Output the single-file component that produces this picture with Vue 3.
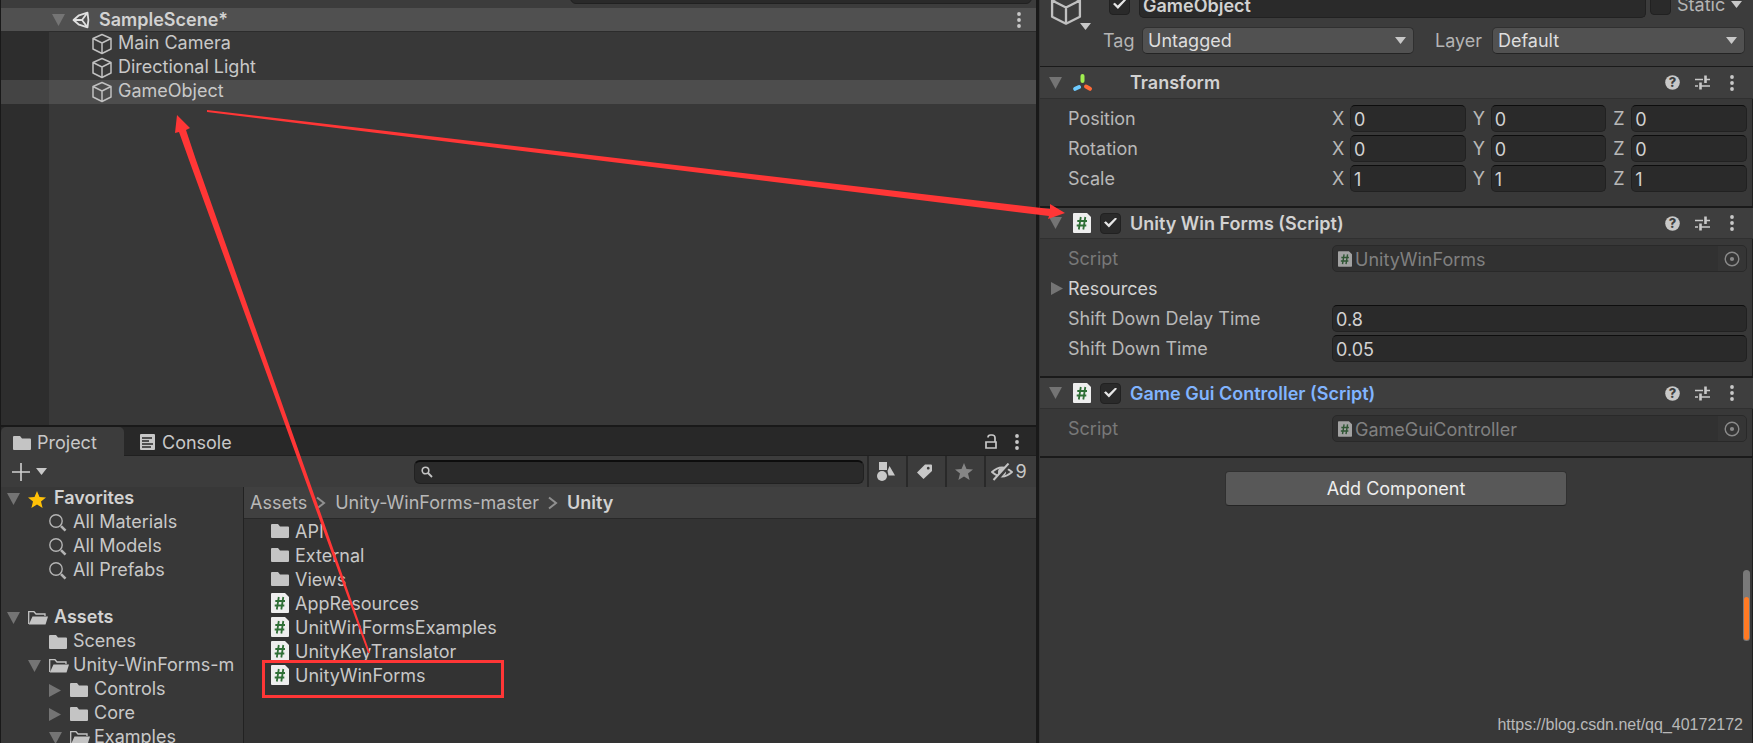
<script setup>
import { ref } from 'vue'

const objects = ref([
  { name: 'Main Camera', selected: false },
  { name: 'Directional Light', selected: false },
  { name: 'GameObject', selected: true },
])

const tree = [
  { name: 'Favorites', depth: 0, arrow: 'down', icon: 'star', bold: true, gold: true },
  { name: 'All Materials', depth: 1, icon: 'lens' },
  { name: 'All Models', depth: 1, icon: 'lens' },
  { name: 'All Prefabs', depth: 1, icon: 'lens' },
  { gap: true },
  { name: 'Assets', depth: 0, arrow: 'down', icon: 'folder-open', bold: true },
  { name: 'Scenes', depth: 1, icon: 'folder' },
  { name: 'Unity-WinForms-m', depth: 1, arrow: 'down', icon: 'folder-open' },
  { name: 'Controls', depth: 2, arrow: 'right', icon: 'folder' },
  { name: 'Core', depth: 2, arrow: 'right', icon: 'folder' },
  { name: 'Examples', depth: 2, arrow: 'down', icon: 'folder-open' },
]

const files = [
  { name: 'API', icon: 'folder' },
  { name: 'External', icon: 'folder' },
  { name: 'Views', icon: 'folder' },
  { name: 'AppResources', icon: 'script' },
  { name: 'UnitWinFormsExamples', icon: 'script' },
  { name: 'UnityKeyTranslator', icon: 'script' },
  { name: 'UnityWinForms', icon: 'script', marked: true },
]

const transform = ref([
  { name: 'Position', axes: { X: '0', Y: '0', Z: '0' } },
  { name: 'Rotation', axes: { X: '0', Y: '0', Z: '0' } },
  { name: 'Scale', axes: { X: '1', Y: '1', Z: '1' } },
])

const objectName = ref('GameObject')
const search = ref('')
const hierarchySearch = ref('')
const delay = ref('0.8')
const time = ref('0.05')
const active = ref(true)
const isStatic = ref(false)
const winFormsOn = ref(true)
const guiOn = ref(true)
</script>

<template>
  <div class="editor">
    <svg class="defs" aria-hidden="true">
      <symbol id="i-down" viewBox="0 0 13 12"><path d="M0 0H13L6.500 12Z" fill="#747474" /></symbol>
      <symbol id="i-right" viewBox="0 0 12 13"><path d="M0 0V13L12 6.500Z" fill="#747474" /></symbol>
      <symbol id="i-caret" viewBox="0 0 11 7"><path d="M0 0H11L5.500 7Z" fill="#c8c8c8" /></symbol>
      <symbol id="i-cube" viewBox="0 0 20 22">
        <path d="M10 1.500L19 5.500V16L10 20.500L1 16V5.500ZM1 5.500L10 10L19 5.500M10 10V20.500" fill="none" stroke="#c0c0c0" stroke-width="1.500" stroke-linejoin="round" />
      </symbol>
      <symbol id="i-unity" viewBox="0 0 18 18">
        <path d="M1.500 9L7 4.300L15.500 1.600L16.400 9L15.500 16.400L7 13.700ZM1.500 9H10M10 9L15.500 1.600M10 9L15.500 16.400" fill="none" stroke="#e0e0e0" stroke-width="1.800" stroke-linejoin="round" />
      </symbol>
      <symbol id="i-kebab" viewBox="0 0 4 16">
        <circle cx="2" cy="2" r="1.900" /><circle cx="2" cy="8" r="1.900" /><circle cx="2" cy="14" r="1.900" />
      </symbol>
      <symbol id="i-folder" viewBox="0 0 20 16">
        <path d="M0 2Q0 1 1 1H7L9 3.500H17Q18 3.500 18 4.500V14Q18 15 17 15H1Q0 15 0 14Z" fill="#c4c4c4" />
      </symbol>
      <symbol id="i-folder-open" viewBox="0 0 20 16">
        <path d="M0.700 14V1.700H6L8 4H17V6" fill="none" stroke="#c4c4c4" stroke-width="1.300" />
        <path d="M4.500 6.500H20L17.500 14.500H0.800Z" fill="#c4c4c4" />
      </symbol>
      <symbol id="i-script" viewBox="0 0 18 20">
        <path d="M1 0H14L18 4V19Q18 20 17 20H1Q0 20 0 19V1Q0 0 1 0Z" fill="#eeeeee" />
        <path d="M7.800 4L5.800 16.500M12.300 4L10.300 16.500M4.300 8H14M3.700 12.500H13.300" fill="none" stroke="#2f6f36" stroke-width="1.800" />
      </symbol>
      <symbol id="i-star" viewBox="0 0 18 17">
        <path d="M9 0L11.500 5.900L18 6.400L13 10.600L14.600 17L9 13.500L3.400 17L5 10.600L0 6.400L6.500 5.900Z" />
      </symbol>
      <symbol id="i-lens" viewBox="0 0 18 18">
        <circle cx="7" cy="7" r="6.200" fill="none" stroke="#b4b4b4" stroke-width="1.400" />
        <path d="M12 12.200L16.500 16.700" stroke="#b4b4b4" stroke-width="2.600" />
      </symbol>
      <symbol id="i-search" viewBox="0 0 12 12">
        <circle cx="4.500" cy="4.500" r="3.300" fill="none" stroke="#c4c4c4" stroke-width="1.600" />
        <path d="M7 7L11 11" stroke="#c4c4c4" stroke-width="1.800" />
      </symbol>
      <symbol id="i-console" viewBox="0 0 16 17">
        <path d="M1 0H14Q15 0 15 1V15Q15 16 14 16H1Q0 16 0 15V1Q0 0 1 0Z" fill="#c8c8c8" />
        <path d="M2 4H12M2 7H9M2 10H13M2 13H11" stroke="#282828" stroke-width="1.300" />
      </symbol>
      <symbol id="i-lock" viewBox="0 0 12 15">
        <path d="M1 8H11V14H1ZM10 8V4Q10 1 7 1H5.500Q3 1 3 3.500" fill="none" stroke="#c8c8c8" stroke-width="1.700" />
      </symbol>
      <symbol id="i-plus" viewBox="0 0 18 18"><path d="M9 0V18M0 9H18" stroke="#d0d0d0" stroke-width="1.600" /></symbol>
      <symbol id="i-shapes" viewBox="0 0 18 19">
        <rect x="2" y="0" width="8" height="8" /><circle cx="5" cy="14" r="5" /><path d="M12.500 4L18 13.500H11.500L10.500 9Z" />
      </symbol>
      <symbol id="i-tag" viewBox="0 0 15 15">
        <path fill-rule="evenodd" d="M8 0.500H14Q15 0.500 15 1.500V7L6.500 15L0 8.500ZM11.200 2.800a1.400 1.400 0 1 0 .1 0Z" />
      </symbol>
      <symbol id="i-eye" viewBox="0 0 22 18">
        <path d="M1 9Q11 0 21 9Q11 18 1 9Z" fill="none" stroke="#c4c4c4" stroke-width="1.800" />
        <circle cx="11" cy="9" r="4" fill="#c4c4c4" />
        <path d="M4 18L19 1" stroke="#3c3c3c" stroke-width="4" /><path d="M2.500 17L17.500 0.500" stroke="#c4c4c4" stroke-width="2" />
      </symbol>
      <symbol id="i-axes" viewBox="0 0 20 18">
        <path d="M9.500 2V7" stroke="#a0ee50" stroke-width="4" stroke-linecap="round" />
        <path d="M6 13L2.200 14.800" stroke="#6ecbff" stroke-width="4" stroke-linecap="round" />
        <path d="M13 12.500L17 14.800" stroke="#ff6a38" stroke-width="4" stroke-linecap="round" />
      </symbol>
      <symbol id="i-help" viewBox="0 0 15 15">
        <circle cx="7.500" cy="7.500" r="7.300" fill="#c8c8c8" />
        <text x="7.500" y="12" text-anchor="middle" font-family="Inter, sans-serif" font-size="13" font-weight="800" fill="#3e3e3e">?</text>
      </symbol>
      <symbol id="i-preset" viewBox="0 0 15 15">
        <path d="M0 4.500H8M11 4.500H15M0 11H3M6 11H15" stroke="#c8c8c8" stroke-width="1.400" />
        <path d="M10.500 0.500V8M5.500 7.500V14.500" stroke="#c8c8c8" stroke-width="2.600" />
      </symbol>
      <symbol id="i-target" viewBox="0 0 16 16">
        <circle cx="8" cy="8" r="6.800" fill="none" stroke="#8a8a8a" stroke-width="1.400" /><circle cx="8" cy="8" r="2.100" fill="#8a8a8a" />
      </symbol>
      <symbol id="i-chevron" viewBox="0 0 10 14"><path d="M1 1.500L8 7L1 12.500" fill="none" stroke="#909090" stroke-width="2" /></symbol>
    </svg>

    <div class="left">
      <section class="hierarchy">
        <div class="hier-bar">
          <input v-model="hierarchySearch" class="hier-search" type="text" aria-label="Search hierarchy" />
        </div>
        <div class="scene">
          <svg class="tri"><use href="#i-down" /></svg>
          <svg class="unity"><use href="#i-unity" /></svg>
          <strong>SampleScene*</strong>
          <button class="icon-btn" aria-label="Scene menu"><svg class="kebab"><use href="#i-kebab" /></svg></button>
        </div>
        <ul class="objects">
          <li v-for="o in objects" :key="o.name" :class="{ selected: o.selected }">
            <svg class="cube"><use href="#i-cube" /></svg><span>{{ o.name }}</span>
          </li>
        </ul>
      </section>

      <section class="project">
        <div class="tabs">
          <button class="tab current"><svg class="folder"><use href="#i-folder" /></svg>Project</button>
          <button class="tab"><svg class="console"><use href="#i-console" /></svg>Console</button>
          <div class="tab-tools">
            <button class="icon-btn" aria-label="Lock"><svg class="lock"><use href="#i-lock" /></svg></button>
            <button class="icon-btn" aria-label="Project menu"><svg class="kebab"><use href="#i-kebab" /></svg></button>
          </div>
        </div>
        <div class="toolbar">
          <button class="icon-btn add" aria-label="Create">
            <svg class="plus"><use href="#i-plus" /></svg><svg class="caret"><use href="#i-caret" /></svg>
          </button>
          <label class="search">
            <svg class="search-icon"><use href="#i-search" /></svg>
            <input v-model="search" type="text" aria-label="Search project" />
          </label>
          <div class="filters">
            <button aria-label="Search by type"><svg class="shapes"><use href="#i-shapes" /></svg></button>
            <button aria-label="Search by label"><svg class="tag"><use href="#i-tag" /></svg></button>
            <button class="dim" aria-label="Save search"><svg class="star"><use href="#i-star" /></svg></button>
            <button class="wide" aria-label="Hidden packages"><svg class="eye"><use href="#i-eye" /></svg>9</button>
          </div>
        </div>
        <div class="browser">
          <ul class="tree">
            <template v-for="(n, i) in tree" :key="i">
              <li v-if="n.gap" class="gap"></li>
              <li v-else :class="['depth-' + n.depth, { bold: n.bold }]">
                <span class="fold"><svg v-if="n.arrow" :class="n.arrow === 'down' ? 'tri' : 'tri-r'"><use :href="'#i-' + n.arrow" /></svg></span>
                <svg :class="[n.icon, { gold: n.gold }]"><use :href="'#i-' + n.icon" /></svg>
                <span class="name">{{ n.name }}</span>
              </li>
            </template>
          </ul>
          <div class="content">
            <nav class="crumbs">
              <a href="#">Assets</a><svg class="chevron"><use href="#i-chevron" /></svg>
              <a href="#">Unity-WinForms-master</a><svg class="chevron"><use href="#i-chevron" /></svg>
              <strong>Unity</strong>
            </nav>
            <ul class="files">
              <li v-for="f in files" :key="f.name">
                <svg :class="f.icon"><use :href="'#i-' + f.icon" /></svg><span>{{ f.name }}</span>
                <i v-if="f.marked" class="mark"></i>
              </li>
            </ul>
          </div>
        </div>
      </section>
    </div>

    <section class="inspector">
      <header class="object">
        <div class="object-icon">
          <svg class="big-cube"><use href="#i-cube" /></svg><svg class="caret"><use href="#i-caret" /></svg>
        </div>
        <div class="object-fields">
          <div class="name-row">
            <input v-model="active" class="check" type="checkbox" aria-label="Active" />
            <input v-model="objectName" class="field object-name" type="text" aria-label="Name" />
            <label class="static"><input v-model="isStatic" class="check" type="checkbox" />Static<svg class="caret"><use href="#i-caret" /></svg></label>
          </div>
          <div class="tag-row">
            <label for="tag">Tag</label>
            <div class="drop tag-drop">
              <select id="tag"><option>Untagged</option></select><svg class="caret"><use href="#i-caret" /></svg>
            </div>
            <label for="layer" class="layer">Layer</label>
            <div class="drop layer-drop">
              <select id="layer"><option>Default</option></select><svg class="caret"><use href="#i-caret" /></svg>
            </div>
          </div>
        </div>
      </header>

      <article class="component first">
        <header>
          <svg class="tri"><use href="#i-down" /></svg>
          <svg class="axes"><use href="#i-axes" /></svg>
          <span class="no-check"></span>
          <h2>Transform</h2>
          <div class="tools">
            <button class="icon-btn" aria-label="Help"><svg class="tool"><use href="#i-help" /></svg></button>
            <button class="icon-btn" aria-label="Presets"><svg class="tool"><use href="#i-preset" /></svg></button>
            <button class="icon-btn" aria-label="Menu"><svg class="kebab"><use href="#i-kebab" /></svg></button>
          </div>
        </header>
        <div class="body">
          <div v-for="row in transform" :key="row.name" class="row">
            <span class="label">{{ row.name }}</span>
            <div class="axes-row">
              <label v-for="(v, axis) in row.axes" :key="axis"><span>{{ axis }}</span><input v-model="row.axes[axis]" class="field" type="text" /></label>
            </div>
          </div>
        </div>
      </article>

      <article class="component">
        <header>
          <svg class="tri"><use href="#i-down" /></svg>
          <svg class="script"><use href="#i-script" /></svg>
          <input v-model="winFormsOn" class="check" type="checkbox" aria-label="Unity Win Forms enabled" />
          <h2>Unity Win Forms (Script)</h2>
          <div class="tools">
            <button class="icon-btn" aria-label="Help"><svg class="tool"><use href="#i-help" /></svg></button>
            <button class="icon-btn" aria-label="Presets"><svg class="tool"><use href="#i-preset" /></svg></button>
            <button class="icon-btn" aria-label="Menu"><svg class="kebab"><use href="#i-kebab" /></svg></button>
          </div>
        </header>
        <div class="body">
          <div class="row disabled">
            <span class="label">Script</span>
            <div class="field ref"><svg class="mini-script"><use href="#i-script" /></svg><span>UnityWinForms</span><button disabled class="pick" aria-label="Pick script"><svg class="target"><use href="#i-target" /></svg></button></div>
          </div>
          <div class="row resources">
            <svg class="tri-r"><use href="#i-right" /></svg>
            <span class="label">Resources</span>
          </div>
          <div class="row">
            <label class="label" for="delay">Shift Down Delay Time</label>
            <input id="delay" v-model="delay" class="field" type="text" />
          </div>
          <div class="row">
            <label class="label" for="time">Shift Down Time</label>
            <input id="time" v-model="time" class="field" type="text" />
          </div>
        </div>
      </article>

      <article class="component">
        <header>
          <svg class="tri"><use href="#i-down" /></svg>
          <svg class="script"><use href="#i-script" /></svg>
          <input v-model="guiOn" class="check" type="checkbox" aria-label="Game Gui Controller enabled" />
          <h2 class="blue">Game Gui Controller (Script)</h2>
          <div class="tools">
            <button class="icon-btn" aria-label="Help"><svg class="tool"><use href="#i-help" /></svg></button>
            <button class="icon-btn" aria-label="Presets"><svg class="tool"><use href="#i-preset" /></svg></button>
            <button class="icon-btn" aria-label="Menu"><svg class="kebab"><use href="#i-kebab" /></svg></button>
          </div>
        </header>
        <div class="body">
          <div class="row disabled">
            <span class="label">Script</span>
            <div class="field ref"><svg class="mini-script"><use href="#i-script" /></svg><span>GameGuiController</span><button disabled class="pick" aria-label="Pick script"><svg class="target"><use href="#i-target" /></svg></button></div>
          </div>
        </div>
      </article>

      <footer class="rest">
        <button class="add-component">Add Component</button>
        <div class="meter"><div class="meter-fill"></div></div>
        <p class="credit">https://blog.csdn.net/qq_40172172</p>
      </footer>
    </section>

    <svg class="arrows" viewBox="0 0 1753 743" aria-hidden="true">
      <path d="M177 115L190 128L186 130L196 160L370 653L368 653L189 160L179 132L175 133Z" />
      <path d="M1065 213L1048 219L1049 216L207 112L207 110L1050 209L1050 204Z" />
    </svg>
  </div>
</template>

<style>
body {
  background: #383838;
}
</style>

<style scoped>
.editor {
  position: relative;
  display: grid;
  grid-template-columns: minmax(0, 1039fr) minmax(0, 714fr);
  height: 100vh;
  overflow: hidden;
  background: #383838;
  color: #c8c8c8;
  font: 18px/22px Inter, "Liberation Sans", sans-serif;
}
.editor * {
  box-sizing: border-box;
}
.defs {
  position: absolute;
  width: 0;
  height: 0;
}
svg {
  flex: none;
  display: block;
  fill: #c8c8c8;
}
ul {
  list-style: none;
  margin: 0;
  padding: 0;
}
button,
input,
select {
  font: inherit;
  color: inherit;
  margin: 0;
}
button {
  border: 0;
  padding: 0;
  background: none;
}
strong {
  font-weight: 600;
  color: #d2d2d2;
}

.tri { width: 13px; height: 12px; }
.tri-r { width: 12px; height: 13px; }
.caret { width: 11px; height: 7px; }
.kebab { width: 4px; height: 16px; }
.cube { width: 20px; height: 22px; }
.unity { width: 18px; height: 18px; }
.folder, .folder-open { width: 20px; height: 16px; }
.script { width: 18px; height: 20px; }
.star { width: 18px; height: 17px; }
.lens { width: 18px; height: 18px; }
.gold { fill: #ffc107; }

.left {
  display: flex;
  flex-direction: column;
  min-height: 0;
  border-left: 1px solid #191919;
  border-right: 3px solid #191919;
}
.hierarchy {
  flex: 425 1 0;
  min-height: 0;
  display: flex;
  flex-direction: column;
}
.hier-bar {
  flex: none;
  display: flex;
  align-items: flex-end;
  justify-content: flex-end;
  height: 8px;
  padding: 0 4px 4px 0;
  background: #3c3c3c;
  overflow: hidden;
}
.hier-search {
  flex: none;
  width: 462px;
  height: 24px;
  border: 1px solid #212121;
  border-radius: 6px;
  background: #2a2a2a;
}
.scene {
  flex: none;
  display: flex;
  align-items: center;
  height: 24px;
  padding: 0 15px 0 51px;
  background: #505050;
  border-bottom: 1px solid #2c2c2c;
}
.scene .unity { margin: 0 9px 0 7px; }
.scene .icon-btn { margin-left: auto; }
.objects {
  flex: 1;
  background: linear-gradient(to right, #2d2d2d 48px, #383838 48px);
}
.objects li {
  display: flex;
  align-items: center;
  height: 24px;
  padding-left: 91px;
}
.objects span,
.tree .name {
  padding-bottom: 2px;
}
.objects .cube { margin-right: 6px; }
.objects .selected {
  background: linear-gradient(to right, #444444 48px, #4d4d4d 48px);
}

.project {
  flex: 316 1 0;
  min-height: 0;
  display: flex;
  flex-direction: column;
  border-top: 2px solid #191919;
}
.tabs {
  flex: none;
  display: flex;
  height: 29px;
  background: #282828;
  box-shadow: inset 0 -1px #202020;
}
.tab {
  display: flex;
  align-items: center;
  gap: 6px;
  padding: 2px 16px 0;
}
.tab.current {
  width: 123px;
  padding: 2px 0 0 12px;
  gap: 4px;
  background: #3c3c3c;
  border-radius: 5px 5px 0 0;
}
.console { width: 16px; height: 17px; }
.tab-tools {
  display: flex;
  align-items: center;
  gap: 18px;
  margin-left: auto;
  padding-right: 17px;
}
.lock { width: 12px; height: 15px; }
.toolbar {
  flex: none;
  display: flex;
  align-items: center;
  height: 31px;
  background: #3c3c3c;
}
.add {
  display: flex;
  align-items: center;
  gap: 6px;
  margin-left: 11px;
}
.plus { width: 18px; height: 18px; }
.search {
  display: flex;
  align-items: center;
  gap: 6px;
  width: 450px;
  height: 24px;
  margin-left: auto;
  padding: 0 6px;
  border: 1px solid #212121;
  border-top: 2px solid #0d0d0d;
  border-radius: 6px;
  background: #2a2a2a;
}
.search-icon { width: 12px; height: 12px; }
.search input {
  flex: 1;
  min-width: 0;
  border: 0;
  padding: 0;
  background: none;
  outline: 0;
}
.filters {
  display: flex;
  align-self: stretch;
  margin-left: 3px;
}
.filters button {
  display: flex;
  align-items: center;
  justify-content: center;
  gap: 2px;
  width: 39px;
  padding-right: 4px;
  border-left: 2px solid #292929;
}
.filters .wide { width: 52px; }
.shapes { width: 18px; height: 19px; }
.tag { width: 15px; height: 15px; }
.dim .star { fill: #868686; }
.eye { width: 22px; height: 18px; }

.browser {
  flex: 1;
  min-height: 0;
  display: grid;
  grid-template-columns: 243px minmax(0, 1fr);
}
.tree {
  overflow: hidden;
  border-right: 1px solid #222222;
}
.tree li {
  display: flex;
  align-items: center;
  height: 24px;
  white-space: nowrap;
}
.tree .gap { height: 23px; }
.tree .fold {
  flex: none;
  display: flex;
  width: 21px;
}
.tree .bold {
  font-weight: 600;
  color: #d2d2d2;
}
.tree .depth-0 { padding-left: 6px; }
.tree .depth-1 { padding-left: 27px; }
.tree .depth-2 { padding-left: 48px; }
.tree .name { margin-left: 4px; }
.tree .lens + .name { margin-left: 6px; }
.tree .star + .name { margin-left: 8px; }
.tree .bold .folder-open + .name { margin-left: 6px; }
.content { background: #333333; }
.crumbs {
  display: flex;
  align-items: center;
  gap: 9px;
  height: 32px;
  padding-left: 6px;
  background: #404040;
  border-bottom: 1px solid #282828;
}
.crumbs a {
  color: #b8b8b8;
  text-decoration: none;
}
.chevron { width: 10px; height: 14px; }
.files li {
  position: relative;
  display: flex;
  align-items: center;
  height: 24px;
  padding-left: 27px;
}
.files span { padding-top: 1px; }
.files svg { margin-right: 6px; }
.files .folder { margin-right: 4px; }
.mark {
  position: absolute;
  left: 18px;
  top: -3px;
  width: 242px;
  height: 38px;
  border: 3px solid #ff3636;
}

.inspector {
  display: flex;
  flex-direction: column;
  min-width: 0;
  min-height: 0;
  border-left: 1px solid #333333;
}
.object {
  flex: none;
  display: flex;
  align-items: flex-end;
  height: 66px;
  overflow: hidden;
  padding: 0 8px 12px 10px;
  background: #3c3c3c;
}
.object-icon {
  display: flex;
  align-items: flex-end;
  width: 53px;
  padding-bottom: 24px;
}
.big-cube { width: 32px; height: 34px; margin-bottom: 4px; }
.object-icon .caret { margin-left: -2px; }
.object-fields {
  flex: 1;
  min-width: 0;
  display: flex;
  flex-direction: column;
  gap: 9px;
}
.name-row,
.tag-row,
.static {
  display: flex;
  align-items: center;
}
.name-row { padding-left: 6px; }
.object-name {
  flex: 1;
  min-width: 0;
  margin: 0 4px 0 9px;
  font-weight: 600;
}
.static { width: 95px; gap: 6px; }
.static .caret { margin-left: auto; margin-right: 3px; }
.static,
.tag-row label {
  color: #b4b4b4;
}
.tag-row > label:first-child { width: 39px; }
.tag-row .layer { width: 78px; padding-left: 21px; }
.drop {
  position: relative;
  min-width: 0;
}
.tag-drop { flex: 272 1 0; }
.layer-drop { flex: 253 1 0; }
.drop select {
  display: block;
  width: 100%;
  height: 27px;
  padding: 0 5px;
  appearance: none;
  border: 1px solid #303030;
  border-bottom-color: #242424;
  border-radius: 5px;
  background: #515151;
  color: #dedede;
}
.drop .caret {
  position: absolute;
  right: 8px;
  top: 10px;
  pointer-events: none;
}

.check {
  flex: none;
  display: block;
  width: 21px;
  height: 21px;
  appearance: none;
  border: 1px solid #212121;
  border-radius: 4px;
  background: #2a2a2a;
}
.check:checked::before {
  content: "";
  display: block;
  width: 13px;
  height: 10px;
  margin: 4px 3px;
  background: #e6e6e6;
  clip-path: polygon(0 50%, 14% 38%, 36% 66%, 88% 0, 100% 12%, 38% 100%);
}
.field {
  height: 27px;
  padding: 1px 4px 0 3px;
  border: 1px solid #212121;
  border-top-color: #0d0d0d;
  border-radius: 5px;
  background: #2a2a2a;
  color: #d2d2d2;
  outline: 0;
}

.component {
  flex: none;
  border-top: 2px solid #1a1a1a;
}
.component.first { border-top-width: 1px; }
.component header {
  display: flex;
  align-items: center;
  height: 31px;
  padding: 0 19px 0 9px;
  background: #3e3e3e;
  border-bottom: 1px solid #303030;
}
.component.first header { height: 32px; }
.component h2 {
  margin: 0 0 0 9px;
  padding-top: 1px;
  font-size: 18px;
  font-weight: 600;
  color: #d2d2d2;
}
.component .blue { color: #81b4ff; }
.component header .script { margin: 0 9px 0 11px; }
.axes { width: 20px; height: 18px; margin: 0 7px 0 11px; }
.no-check { width: 21px; }
.tools {
  display: flex;
  align-items: center;
  gap: 15px;
  margin-left: auto;
}
.tool { width: 15px; height: 15px; }
.tools .kebab { margin-left: 5px; }
.body {
  display: flex;
  flex-direction: column;
  gap: 3px;
  padding: 6px 5px 14px 28px;
  border-right: 1px solid #1f1f1f;
}
.row {
  position: relative;
  display: grid;
  grid-template-columns: 264px minmax(0, 1fr);
  align-items: center;
  height: 27px;
}
.label {
  padding-top: 1px;
  color: #b8b8b8;
}
.axes-row {
  display: grid;
  grid-template-columns: repeat(3, minmax(0, 1fr));
  gap: 7px;
}
.axes-row label {
  display: flex;
  align-items: center;
  color: #b8b8b8;
}
.axes-row span {
  flex: none;
  width: 18px;
  padding-top: 1px;
}
.axes-row .field {
  flex: 1;
  min-width: 0;
}
.disabled .label { color: #787878; }
.resources .label { color: #d2d2d2; }
.resources .tri-r {
  position: absolute;
  left: -17px;
  top: 7px;
}
.ref {
  display: flex;
  align-items: center;
  gap: 3px;
  padding: 0 0 0 5px;
  border-color: #292929;
  background: #313131;
  color: #808080;
  overflow: hidden;
}
.ref span { padding-top: 2px; }
.mini-script { width: 14px; height: 16px; opacity: 0.6; }
.pick {
  display: flex;
  align-items: center;
  justify-content: center;
  align-self: stretch;
  width: 28px;
  margin-left: auto;
  background: #353535;
}
.target { width: 16px; height: 16px; }

.rest {
  flex: 1;
  position: relative;
  display: flex;
  flex-direction: column;
  align-items: center;
  justify-content: space-between;
  padding: 13px 0 7px;
  border-top: 2px solid #1a1a1a;
  border-right: 1px solid #1f1f1f;
}
.add-component {
  width: 48%;
  height: 35px;
  border: 1px solid #303030;
  border-bottom-color: #242424;
  border-radius: 4px;
  background: #585858;
  color: #eeeeee;
}
.meter {
  position: absolute;
  right: 2px;
  top: 112px;
  width: 7px;
  height: 71px;
  padding: 27px 1px 1px;
  border-radius: 4px;
  background: #797979;
}
.meter-fill {
  height: 100%;
  border-radius: 3px;
  background: #ff7a24;
}
.credit {
  align-self: flex-end;
  margin: 0 9px 0 0;
  font: 16px/22px "Liberation Sans", Arial, sans-serif;
  color: #b8b8b8;
}
.arrows {
  position: absolute;
  left: 0;
  top: 0;
  width: 100%;
  pointer-events: none;
  fill: #ff3636;
}
</style>
